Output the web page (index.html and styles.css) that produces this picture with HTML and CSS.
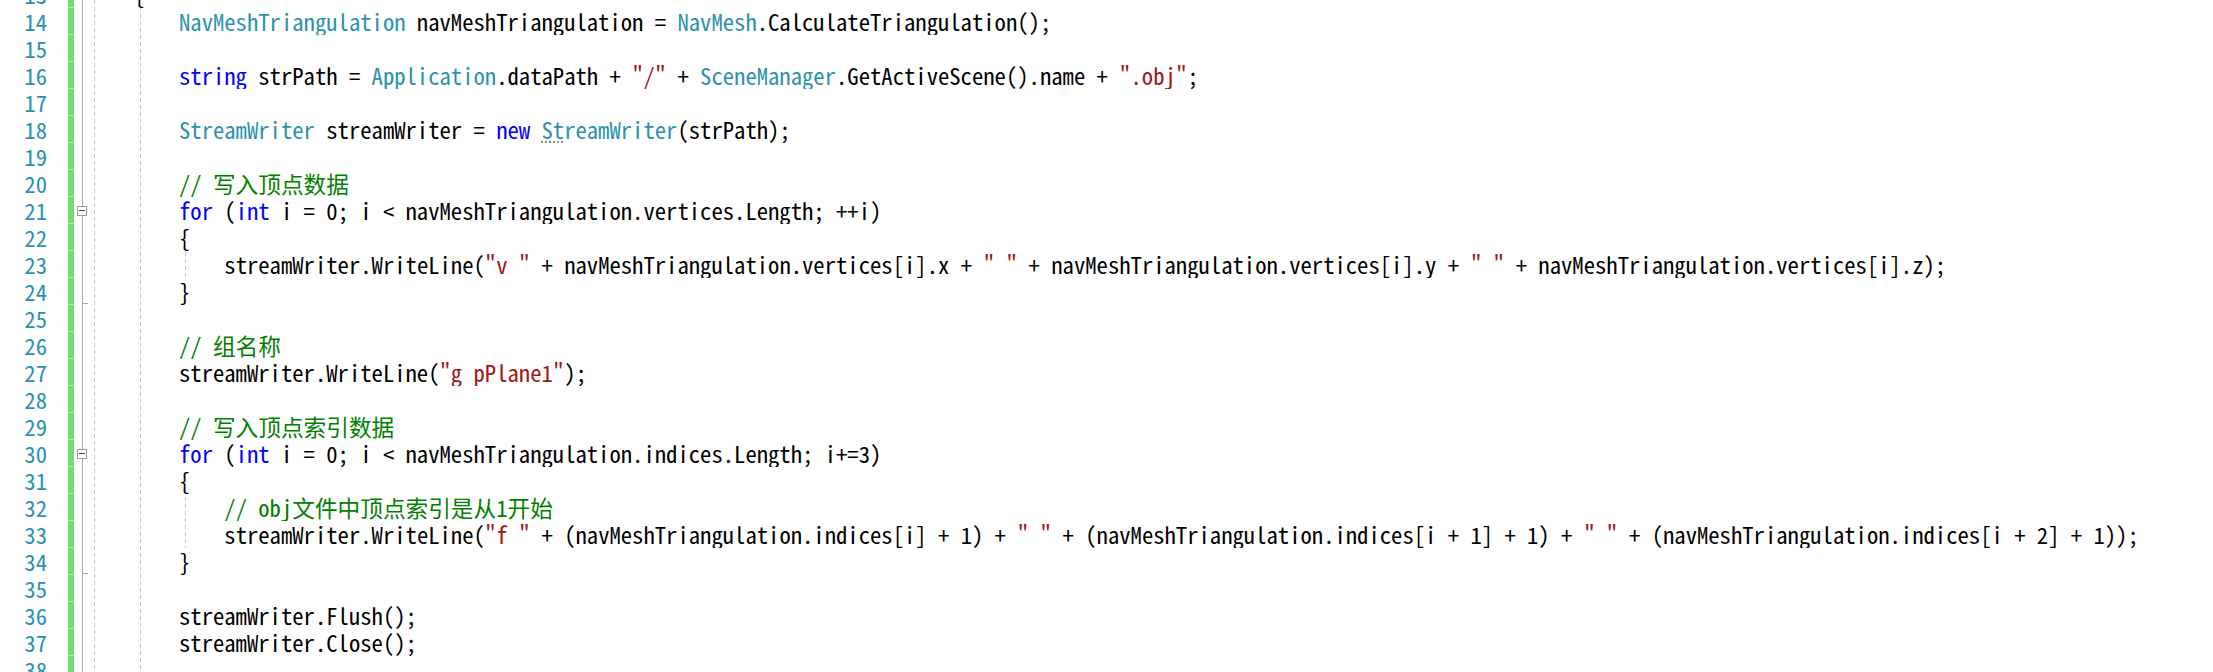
FILE: index.html
```html
<!DOCTYPE html>
<html lang="zh">
<head>
<meta charset="utf-8">
<title>Code</title>
<link rel="stylesheet" href="styles.css">
</head>
<body>
<div class="editor">
  <div class="row"><span class="num">13</span><span class="gap"></span><span class="chg"></span><span class="ol"></span><span class="code"><span class="ind"></span>{</span></div>
  <div class="row"><span class="num">14</span><span class="gap"></span><span class="chg"></span><span class="ol"></span><span class="code"><span class="ind"></span><span class="ind"></span><span class="t">NavMeshTriangulation</span> navMeshTriangulation = <span class="t">NavMesh</span>.CalculateTriangulation();</span></div>
  <div class="row"><span class="num">15</span><span class="gap"></span><span class="chg"></span><span class="ol"></span><span class="code"><span class="ind"></span><span class="ind"></span></span></div>
  <div class="row"><span class="num">16</span><span class="gap"></span><span class="chg"></span><span class="ol"></span><span class="code"><span class="ind"></span><span class="ind"></span><span class="k">string</span> strPath = <span class="t">Application</span>.dataPath + <span class="s">"/"</span> + <span class="t">SceneManager</span>.GetActiveScene().name + <span class="s">".obj"</span>;</span></div>
  <div class="row"><span class="num">17</span><span class="gap"></span><span class="chg"></span><span class="ol"></span><span class="code"><span class="ind"></span><span class="ind"></span></span></div>
  <div class="row"><span class="num">18</span><span class="gap"></span><span class="chg"></span><span class="ol"></span><span class="code"><span class="ind"></span><span class="ind"></span><span class="t">StreamWriter</span> streamWriter = <span class="k">new</span> <span class="t"><span class="hint">St</span>reamWriter</span>(strPath);</span></div>
  <div class="row"><span class="num">19</span><span class="gap"></span><span class="chg"></span><span class="ol"></span><span class="code"><span class="ind"></span><span class="ind"></span></span></div>
  <div class="row"><span class="num">20</span><span class="gap"></span><span class="chg"></span><span class="ol"></span><span class="code"><span class="ind"></span><span class="ind"></span><span class="c">// 写入顶点数据</span></span></div>
  <div class="row"><span class="num">21</span><span class="gap"></span><span class="chg"></span><span class="ol"><span class="fold"></span></span><span class="code"><span class="ind"></span><span class="ind"></span><span class="k">for</span> (<span class="k">int</span> i = 0; i &lt; navMeshTriangulation.vertices.Length; ++i)</span></div>
  <div class="row"><span class="num">22</span><span class="gap"></span><span class="chg"></span><span class="ol"></span><span class="code"><span class="ind"></span><span class="ind"></span>{</span></div>
  <div class="row"><span class="num">23</span><span class="gap"></span><span class="chg"></span><span class="ol"></span><span class="code"><span class="ind"></span><span class="ind"></span><span class="ind"></span>streamWriter.WriteLine(<span class="s">"v "</span> + navMeshTriangulation.vertices[i].x + <span class="s">" "</span> + navMeshTriangulation.vertices[i].y + <span class="s">" "</span> + navMeshTriangulation.vertices[i].z);</span></div>
  <div class="row"><span class="num">24</span><span class="gap"></span><span class="chg"></span><span class="ol end"></span><span class="code"><span class="ind"></span><span class="ind"></span>}</span></div>
  <div class="row"><span class="num">25</span><span class="gap"></span><span class="chg"></span><span class="ol"></span><span class="code"><span class="ind"></span><span class="ind"></span></span></div>
  <div class="row"><span class="num">26</span><span class="gap"></span><span class="chg"></span><span class="ol"></span><span class="code"><span class="ind"></span><span class="ind"></span><span class="c">// 组名称</span></span></div>
  <div class="row"><span class="num">27</span><span class="gap"></span><span class="chg"></span><span class="ol"></span><span class="code"><span class="ind"></span><span class="ind"></span>streamWriter.WriteLine(<span class="s">"g pPlane1"</span>);</span></div>
  <div class="row"><span class="num">28</span><span class="gap"></span><span class="chg"></span><span class="ol"></span><span class="code"><span class="ind"></span><span class="ind"></span></span></div>
  <div class="row"><span class="num">29</span><span class="gap"></span><span class="chg"></span><span class="ol"></span><span class="code"><span class="ind"></span><span class="ind"></span><span class="c">// 写入顶点索引数据</span></span></div>
  <div class="row"><span class="num">30</span><span class="gap"></span><span class="chg"></span><span class="ol"><span class="fold"></span></span><span class="code"><span class="ind"></span><span class="ind"></span><span class="k">for</span> (<span class="k">int</span> i = 0; i &lt; navMeshTriangulation.indices.Length; i+=3)</span></div>
  <div class="row"><span class="num">31</span><span class="gap"></span><span class="chg"></span><span class="ol"></span><span class="code"><span class="ind"></span><span class="ind"></span>{</span></div>
  <div class="row"><span class="num">32</span><span class="gap"></span><span class="chg"></span><span class="ol"></span><span class="code"><span class="ind"></span><span class="ind"></span><span class="ind"></span><span class="c">// obj文件中顶点索引是从1开始</span></span></div>
  <div class="row"><span class="num">33</span><span class="gap"></span><span class="chg"></span><span class="ol"></span><span class="code"><span class="ind"></span><span class="ind"></span><span class="ind"></span>streamWriter.WriteLine(<span class="s">"f "</span> + (navMeshTriangulation.indices[i] + 1) + <span class="s">" "</span> + (navMeshTriangulation.indices[i + 1] + 1) + <span class="s">" "</span> + (navMeshTriangulation.indices[i + 2] + 1));</span></div>
  <div class="row"><span class="num">34</span><span class="gap"></span><span class="chg"></span><span class="ol end"></span><span class="code"><span class="ind"></span><span class="ind"></span>}</span></div>
  <div class="row"><span class="num">35</span><span class="gap"></span><span class="chg"></span><span class="ol"></span><span class="code"><span class="ind"></span><span class="ind"></span></span></div>
  <div class="row"><span class="num">36</span><span class="gap"></span><span class="chg"></span><span class="ol"></span><span class="code"><span class="ind"></span><span class="ind"></span>streamWriter.Flush();</span></div>
  <div class="row"><span class="num">37</span><span class="gap"></span><span class="chg"></span><span class="ol"></span><span class="code"><span class="ind"></span><span class="ind"></span>streamWriter.Close();</span></div>
  <div class="row"><span class="num">38</span><span class="gap"></span><span class="chg"></span><span class="ol"></span><span class="code"><span class="ind"></span><span class="ind"></span></span></div>
</div>
</body>
</html>
```
FILE: styles.css
```css
html, body {
  margin: 0;
  padding: 0;
  background: #ffffff;
  overflow: hidden;
}

body {
  font-family: "Noto Sans Mono CJK SC", "Noto Sans CJK SC", "Liberation Mono", monospace;
  font-size: 22.67px;
  color: #000000;
}

.editor {
  margin-top: -19px;
}

.row {
  display: grid;
  grid-template-columns: 47px 21px 6px 14.33px 1fr;
  height: 27px;
  line-height: 27px;
}

.num {
  text-align: right;
  color: #2b91af;
  white-space: pre;
}

.chg {
  background: #72dc72;
  box-shadow: inset 0 -1px 0 #b2ebb2;
}

.ol {
  display: flex;
  align-items: center;
  background:
    linear-gradient(to right, transparent 8px, #a8a8a8 8px, #a8a8a8 9px, transparent 9px);
}

.ol.end {
  background:
    linear-gradient(#a8a8a8, #a8a8a8) no-repeat 8px calc(100% - 1px) / 6px 1px,
    linear-gradient(to right, transparent 8px, #a8a8a8 8px, #a8a8a8 9px, transparent 9px);
}

.fold {
  box-sizing: border-box;
  width: 10px;
  height: 10px;
  margin-left: 3px;
  border: 1px solid #9a9a9a;
  background: #ffffff;
  display: flex;
  align-items: center;
  justify-content: center;
}

.fold::before {
  content: "";
  width: 6px;
  height: 1px;
  background: #4a4a4a;
}

.code {
  white-space: pre;
  overflow: hidden;
}

.ind {
  display: inline-block;
  width: 45.33px;
  height: 27px;
  vertical-align: top;
  position: relative;
}

.ind::before {
  content: "";
  position: absolute;
  left: 6px;
  top: 0;
  bottom: 0;
  width: 1px;
  background-image: repeating-linear-gradient(to bottom, #c6c6c6 0, #c6c6c6 4px, transparent 4px, transparent 7px);
  background-attachment: fixed;
}

.t { color: #2b91af; }
.k { color: #0000ff; }
.s { color: #a31515; }
.c { color: #008000; }

.hint {
  text-decoration: underline dotted #8c8c8c;
  text-underline-offset: 2px;
}
```
